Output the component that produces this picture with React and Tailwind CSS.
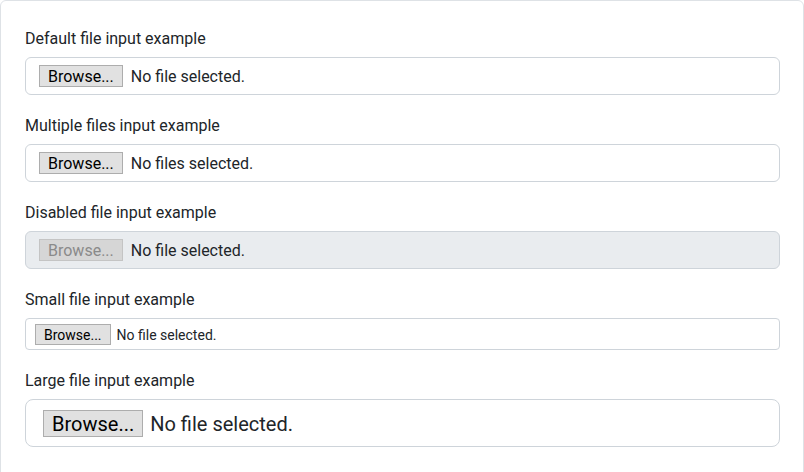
const font = { fontFamily: 'Roboto, "Liberation Sans", sans-serif' }

function FileInput({ size = 'md', disabled = false, multiple = false }) {
  const box = {
    sm: 'h-[32px] pl-[9px] rounded-[4px] text-[14px] gap-[6px]',
    md: 'h-[38px] pl-[13px] rounded-[6px] text-[16px] gap-[8px]',
    lg: 'h-[48px] pl-[17px] rounded-[8px] text-[20px] gap-[7px]',
  }[size]
  const btn = {
    sm: 'h-[21px] pt-[1px] leading-[18px]',
    md: 'h-[22px] pt-[1px] leading-[19px]',
    lg: 'h-[27px] pt-[1px] leading-[24px]',
  }[size]
  return (
    <div
      className={`flex items-center border border-[#ced4da] text-[#212529] ${box} ${
        disabled ? 'bg-[#e9ecef]' : 'bg-white'
      }`}
    >
      <span
        className={`px-2 border ${btn} ${
          disabled
            ? 'bg-[#d6d6d6] border-[#c4c4c4] text-[#8a8a8a]'
            : 'bg-[#e1e1e1] border-[#adadad] text-black'
        }`}
      >
        Browse...
      </span>
      <span className="pt-[2px]">{multiple ? 'No files selected.' : 'No file selected.'}</span>
    </div>
  )
}

function Group({ label, children, last }) {
  return (
    <div className={last ? '' : 'mb-[17px]'}>
      <label className="block pt-[2px] mb-[6px] leading-6 text-[16px] text-[#212529]">{label}</label>
      {children}
    </div>
  )
}

export default function App() {
  return (
    <div className="h-[472px] overflow-hidden bg-white" style={font}>
      <div className="border border-[#dee2e6] rounded-[6px] pl-6 pr-[23px] pt-6 pb-10">
        <Group label="Default file input example">
          <FileInput />
        </Group>
        <Group label="Multiple files input example">
          <FileInput multiple />
        </Group>
        <Group label="Disabled file input example">
          <FileInput disabled />
        </Group>
        <Group label="Small file input example">
          <FileInput size="sm" />
        </Group>
        <Group label="Large file input example" last>
          <FileInput size="lg" />
        </Group>
      </div>
    </div>
  )
}
